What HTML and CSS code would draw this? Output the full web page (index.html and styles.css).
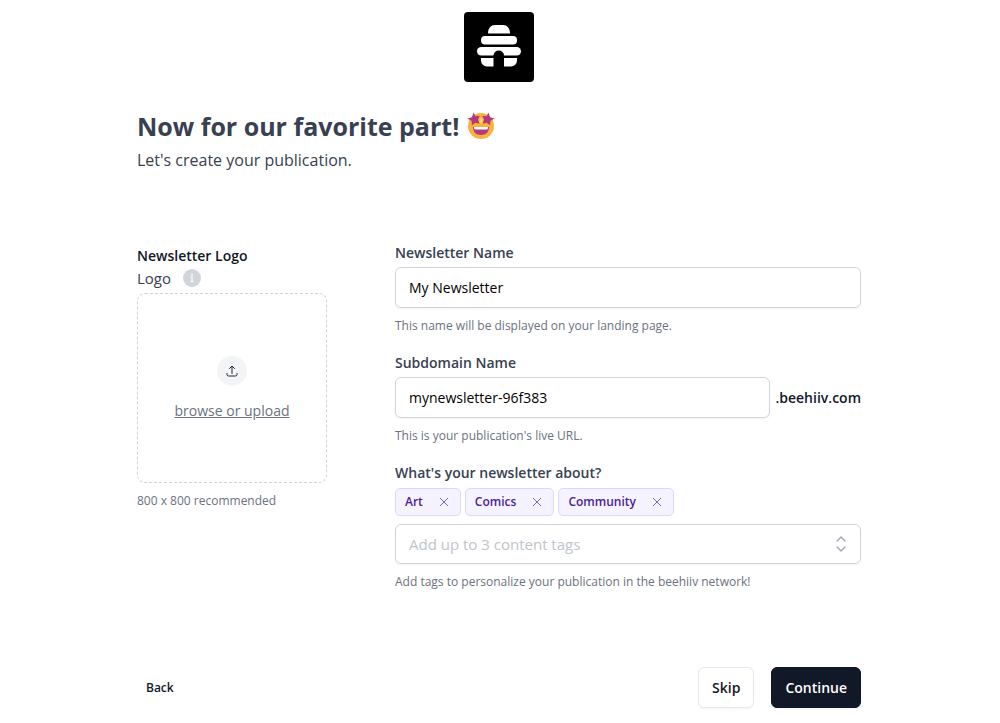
FILE: index.html
```html
<!DOCTYPE html>
<html lang="en">
<head>
    <meta charset="UTF-8">
    <meta name="viewport" content="width=device-width, initial-scale=1.0">
    <title>Create your publication</title>
    <link rel="stylesheet" href="styles.css">
</head>
<body>
    <main class="container">
        <svg class="brand" viewBox="0 0 70 70" role="img" aria-label="beehiiv">
            <rect width="70" height="70" rx="4" fill="#000"/>
            <g fill="#fff">
                <path d="M24 21.500C24 16 27 13 31 13h8c4 0 7 3 7 8.500z"/>
                <rect x="17" y="24" width="36" height="8.500" rx="4"/>
                <rect x="13" y="35" width="44" height="8.500" rx="4.250"/>
                <path d="M17 46h36v2.500a6 6 0 0 1-6 6H23a6 6 0 0 1-6-6z"/>
            </g>
            <path d="M29.500 56V43.500a5.250 5 0 0 1 10.500 0V56z" fill="#000"/>
        </svg>

        <header class="intro">
            <h1>Now for our favorite part!
                <svg class="emoji" viewBox="0 0 28 28" aria-hidden="true">
                    <circle cx="14" cy="14" r="13" fill="#f9b23c"/>
                    <path d="M14 5q2 2 2 5t-2 2-2-2 2-5z" fill="#ffd15a"/>
                    <path d="M6.500 .5l2 3.700 4.300-.4-1.800 3.700 1.500 4.300-4-1-3.700 2.500-.1-4.300L.5 6.500l4.500-1.300z" fill="#b3387f"/>
                    <path d="M21.500 .5l-2 3.700-4.300-.4 1.800 3.700-1.500 4.300 4-1 3.700 2.500.1-4.300 4.200-2.500-4.500-1.300z" fill="#b3387f"/>
                    <path d="M6 15h16c0 5-3 8-8 8s-8-3-8-8z" fill="#b3387f"/>
                    <path d="M7 15h14v1q0 1.500-1.500 1.500h-11Q7 17.500 7 16z" fill="#fff"/>
                </svg>
            </h1>
            <p>Let's create your publication.</p>
        </header>

        <form id="publication-form">
            <div class="columns">
                <section class="logo-column">
                    <h2>Newsletter Logo</h2>
                    <div class="logo-label">
                        <label for="logo">Logo</label>
                        <svg class="info" viewBox="0 0 18 18" aria-hidden="true">
                            <circle cx="9" cy="9" r="9" fill="#d1d5db"/>
                            <circle cx="9" cy="5.500" r="1" fill="#fff"/>
                            <path d="M7.500 8H9v4.500M7.500 12.500h3" fill="none" stroke="#fff" stroke-width="1.200"/>
                        </svg>
                    </div>
                    <input class="file-input" type="file" id="logo" name="logo" accept="image/*">
                    <label class="dropzone" for="logo">
                        <span class="upload-icon">
                            <svg viewBox="0 0 16 16" aria-hidden="true">
                                <path d="M8 10.500v-7M5.500 5.500L8 3l2.500 2.500M3 10.500v1A1.500 1.500 0 0 0 4.500 13h7a1.500 1.500 0 0 0 1.500-1.500v-1" fill="none" stroke="#1f2937" stroke-linecap="round" stroke-linejoin="round"/>
                            </svg>
                        </span>
                        <span class="upload-text">browse or upload</span>
                    </label>
                    <p class="hint">800 x 800 recommended</p>
                </section>

                <section class="fields">
                    <div class="field">
                        <label for="name">Newsletter Name</label>
                        <input type="text" id="name" name="name" value="My Newsletter">
                        <p class="hint">This name will be displayed on your landing page.</p>
                    </div>

                    <div class="field">
                        <label for="subdomain">Subdomain Name</label>
                        <div class="subdomain">
                            <input type="text" id="subdomain" name="subdomain" value="mynewsletter-96f383">
                            <span>.beehiiv.com</span>
                        </div>
                        <p class="hint">This is your publication's live URL.</p>
                    </div>

                    <div class="field">
                        <label for="tags">What's your newsletter about?</label>
                        <div class="tag-list">
                            <span class="tag">Art
                                <button type="button" class="remove-btn" aria-label="Remove Art"><svg viewBox="0 0 10 10"><path d="M1 1l8 8M9 1L1 9"/></svg></button>
                            </span>
                            <span class="tag">Comics
                                <button type="button" class="remove-btn" aria-label="Remove Comics"><svg viewBox="0 0 10 10"><path d="M1 1l8 8M9 1L1 9"/></svg></button>
                            </span>
                            <span class="tag">Community
                                <button type="button" class="remove-btn" aria-label="Remove Community"><svg viewBox="0 0 10 10"><path d="M1 1l8 8M9 1L1 9"/></svg></button>
                            </span>
                        </div>
                        <div class="combobox">
                            <input type="text" id="tags" name="tags" placeholder="Add up to 3 content tags">
                            <button type="button" class="toggle-btn" aria-label="Show tags">
                                <svg viewBox="0 0 12 16"><path d="M2 5l4-4 4 4M2 11l4 4 4-4"/></svg>
                            </button>
                        </div>
                        <p class="hint">Add tags to personalize your publication in the beehiiv network!</p>
                    </div>
                </section>
            </div>

            <div class="actions">
                <button type="button" class="back-btn">Back</button>
                <button type="button" class="skip-btn">Skip</button>
                <button type="submit" class="continue-btn">Continue</button>
            </div>
        </form>
    </main>
</body>
</html>
```
FILE: styles.css
```css
* {
    box-sizing: border-box;
}
body {
    font-family: "Segoe UI", "Open Sans", "Noto Sans", sans-serif;
    font-size: 14px;
    line-height: 20px;
    margin: 0;
    padding: 12px 2px 0 0;
    background-color: #fff;
    color: #374151;
}
h1, h2, p {
    margin: 0;
}
input, button {
    font: inherit;
}
button {
    padding: 0;
    border: none;
    background: none;
    cursor: pointer;
}
.container {
    max-width: 724px;
    margin: 0 auto;
}
.brand {
    display: block;
    width: 70px;
    height: 70px;
    margin: 0 auto;
}
.intro {
    margin-top: 26px;
}
.intro h1 {
    display: flex;
    align-items: center;
    gap: 8px;
    font-size: 25px;
    font-weight: 700;
    line-height: 36px;
}
.intro p {
    font-size: 16px;
    line-height: 32px;
}
.emoji {
    width: 28px;
    height: 28px;
}
.columns {
    display: grid;
    grid-template-columns: 190px 1fr;
    gap: 68px;
    margin-top: 67px;
}
.logo-column {
    padding-top: 3px;
}
.logo-column h2 {
    font-size: 14px;
    font-weight: 600;
    line-height: 20px;
    color: #111827;
}
.logo-label {
    display: flex;
    align-items: center;
    gap: 12px;
    margin: 2px 0 5px;
    font-weight: 500;
}
.logo-label label {
    font-size: 15px;
}
.info {
    width: 18px;
    height: 18px;
}
.file-input {
    position: absolute;
    width: 1px;
    height: 1px;
    opacity: 0;
}
.dropzone {
    display: flex;
    flex-direction: column;
    align-items: center;
    justify-content: center;
    gap: 15px;
    aspect-ratio: 1;
    margin-bottom: 8px;
    border: 1px dashed #d1d5db;
    border-radius: 8px;
    color: #6b7280;
    cursor: pointer;
}
.upload-icon {
    display: flex;
    padding: 7px;
    border-radius: 50%;
    background-color: #f3f4f6;
}
.upload-icon svg {
    width: 16px;
    height: 16px;
}
.upload-text {
    text-decoration: underline;
}
.hint {
    font-size: 12px;
    color: #6b7280;
}
.fields {
    display: flex;
    flex-direction: column;
    gap: 17px;
}
.field > label {
    display: block;
    margin-bottom: 4px;
    font-weight: 600;
}
.field input {
    width: 100%;
    min-width: 0;
    height: 41px;
    padding: 0 13px;
    border: 1px solid #d1d5db;
    border-radius: 6px;
    box-shadow: 0 1px 2px rgba(0, 0, 0, 0.05);
    color: #000;
}
.field .hint {
    margin-top: 8px;
}
.subdomain {
    display: flex;
    align-items: center;
    gap: 5px;
    font-weight: 600;
    color: #111827;
}
.subdomain input {
    flex: 1;
    font-weight: 400;
}
.tag-list {
    display: flex;
    flex-wrap: wrap;
    gap: 4px;
    margin: 5px 0 8px;
}
.tag {
    display: flex;
    align-items: center;
    gap: 16px;
    height: 28px;
    padding: 0 11px 0 9px;
    border: 1px solid #ddd6fe;
    border-radius: 5px;
    background-color: #f5f3ff;
    color: #4c1d95;
    font-size: 12px;
    font-weight: 600;
}
.remove-btn, .toggle-btn {
    display: flex;
}
.remove-btn svg {
    width: 10px;
    height: 10px;
    fill: none;
    stroke: #7c66b8;
}
.combobox {
    position: relative;
}
.field .combobox input {
    display: block;
    height: 40px;
    padding-right: 36px;
    font-size: 15px;
}
.combobox input::placeholder {
    color: #c0c4cc;
}
.toggle-btn {
    position: absolute;
    top: 12px;
    right: 14px;
}
.toggle-btn svg {
    width: 12px;
    height: 16px;
    fill: none;
    stroke: #9ca3af;
    stroke-width: 1.3;
    stroke-linecap: round;
    stroke-linejoin: round;
}
.actions {
    display: flex;
    align-items: center;
    gap: 17px;
    margin-top: 75px;
    padding-bottom: 15px;
}
.back-btn {
    margin-right: auto;
    padding: 9px;
    font-size: 12px;
    font-weight: 600;
    color: #111827;
}
.skip-btn, .continue-btn {
    height: 41px;
    padding: 0 13px;
    border: 1px solid #e5e7eb;
    border-radius: 6px;
    box-shadow: 0 1px 2px rgba(0, 0, 0, 0.05);
    font-weight: 600;
    color: #111827;
}
.continue-btn {
    border-color: #111827;
    background-color: #111827;
    color: #fff;
}
```
